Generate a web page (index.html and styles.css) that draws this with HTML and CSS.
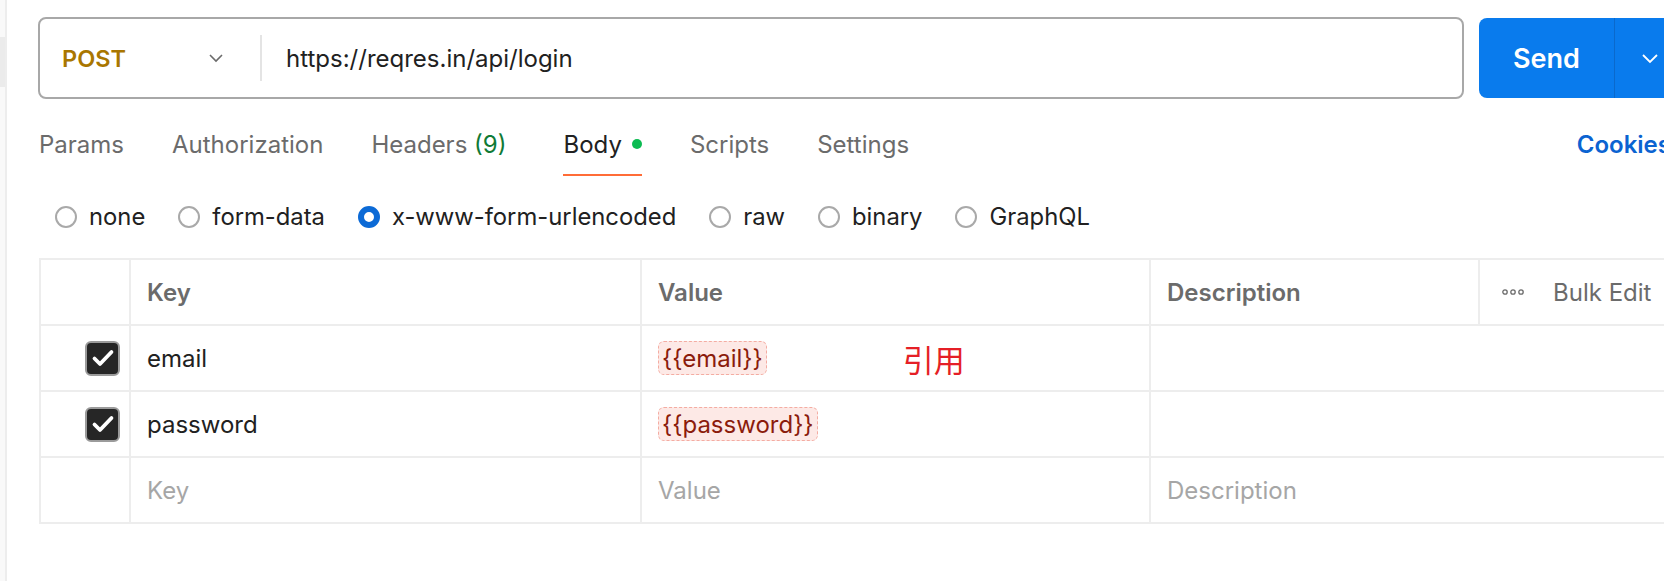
FILE: index.html
```html
<!DOCTYPE html>
<html lang="en">
<head>
  <meta charset="UTF-8">
  <title>POST login</title>
  <link rel="stylesheet" href="styles.css">
</head>
<body>
<div class="app">
  <aside class="sidebar"><div class="sidebar-active"></div></aside>

  <main class="workspace">
    <!-- request bar -->
    <div class="request-bar">
      <div class="url-box">
        <div class="method">
          <span>POST</span>
          <svg width="16" height="10" viewBox="0 0 16 10"><path d="M2 2l6 6 6-6" fill="none" stroke="#6b6b6b" stroke-width="1.6"/></svg>
        </div>
        <div class="url-divider"></div>
        <div class="url">https://reqres.in/api/login</div>
      </div>
      <div class="send-group">
        <div class="send-btn">Send</div>
        <div class="send-more">
          <svg width="18" height="11" viewBox="0 0 18 11"><path d="M2 2l7 7 7-7" fill="none" stroke="#fff" stroke-width="1.8"/></svg>
        </div>
      </div>
    </div>

    <nav class="tabs">
      <span class="tab">Params</span>
      <span class="tab">Authorization</span>
      <span class="tab headers">Headers <span class="count">(9)</span></span>
      <span class="tab active">Body<span class="dot"></span></span>
      <span class="tab">Scripts</span>
      <span class="tab">Settings</span>
      <span class="cookies">Cookies</span>
    </nav>

    <div class="body-types">
      <label class="radio"><span class="radio-dot"></span>none</label>
      <label class="radio"><span class="radio-dot"></span>form-data</label>
      <label class="radio"><span class="radio-dot checked"></span>x-www-form-urlencoded</label>
      <label class="radio"><span class="radio-dot"></span>raw</label>
      <label class="radio"><span class="radio-dot"></span>binary</label>
      <label class="radio"><span class="radio-dot"></span>GraphQL</label>
    </div>

    <div class="kv-table">
      <div class="kv-row kv-head">
        <div class="cell"></div>
        <div class="cell">Key</div>
        <div class="cell">Value</div>
        <div class="cell">Description</div>
        <div class="cell bulk">
          <svg width="22" height="6" viewBox="0 0 22 6"><circle cx="3" cy="3" r="2.2" fill="none" stroke="#6b6b6b" stroke-width="1.3"/><circle cx="11" cy="3" r="2.2" fill="none" stroke="#6b6b6b" stroke-width="1.3"/><circle cx="19" cy="3" r="2.2" fill="none" stroke="#6b6b6b" stroke-width="1.3"/></svg>
          <span>Bulk Edit</span>
        </div>
      </div>
      <div class="kv-row">
        <div class="cell check-cell"><span class="checkbox"><svg width="24" height="20" viewBox="0 0 24 20"><path d="M3.5 10.5l5.5 5.5L20.5 4" fill="none" stroke="#fff" stroke-width="3.8" stroke-linecap="round" stroke-linejoin="round"/></svg></span></div>
        <div class="cell">email</div>
        <div class="cell"><span class="var">{{email}}</span><span class="note">引用</span></div>
        <div class="cell"></div>
      </div>
      <div class="kv-row">
        <div class="cell check-cell"><span class="checkbox"><svg width="24" height="20" viewBox="0 0 24 20"><path d="M3.5 10.5l5.5 5.5L20.5 4" fill="none" stroke="#fff" stroke-width="3.8" stroke-linecap="round" stroke-linejoin="round"/></svg></span></div>
        <div class="cell">password</div>
        <div class="cell"><span class="var">{{password}}</span></div>
        <div class="cell"></div>
      </div>
      <div class="kv-row placeholder">
        <div class="cell"></div>
        <div class="cell">Key</div>
        <div class="cell">Value</div>
        <div class="cell">Description</div>
      </div>
    </div>
  </main>
</div>
</body>
</html>
```

FILE: styles.css
```css
body {
  margin: 0;
  font-family: "Inter", "Noto Sans", sans-serif;
  color: #212121;
  background: #fff;
  overflow: hidden;
}

.app {
  display: flex;
  height: 100vh;
}

.sidebar {
  flex-shrink: 0;
  width: 5px;
  padding-top: 37px;
  background: #f9f9f9;
  border-right: 2px solid #ededed;
}

.sidebar-active {
  height: 50px;
  background: #ebebeb;
}

.workspace {
  flex-shrink: 0;
  width: 1700px;
  padding: 17px 0 0 31px;
}

/* request bar */
.request-bar {
  display: flex;
  align-items: center;
  gap: 15px;
}

.url-box {
  flex-shrink: 0;
  width: 1426px;
  height: 82px;
  box-sizing: border-box;
  border: 2px solid #a8a8a8;
  border-radius: 8px;
  display: flex;
  align-items: center;
  padding-left: 22px;
}

.method {
  width: 162px;
  display: flex;
  align-items: center;
  justify-content: space-between;
  margin-right: 36px;
  font-size: 23.5px;
  font-weight: 600;
  color: #a97600;
}

.url-divider {
  width: 2px;
  height: 46px;
  background: #e4e4e4;
}

.url {
  margin-left: 24px;
  font-size: 24px;
}

.send-group {
  flex-shrink: 0;
  display: flex;
  height: 80px;
  background: #097bed;
  border-radius: 8px 0 0 8px;
}

.send-btn {
  width: 135px;
  display: flex;
  align-items: center;
  justify-content: center;
  border-right: 1px solid #0a69cc;
  color: #fff;
  font-size: 27px;
  font-weight: 600;
}

.send-more {
  width: 70px;
  display: flex;
  align-items: center;
  justify-content: center;
}

/* tabs */
.tabs {
  display: flex;
  align-items: flex-end;
  gap: 48px;
  margin-top: 34px;
  padding-left: 1px;
  width: 1632px;
}

.tab {
  font-size: 24px;
  line-height: 24px;
  color: #6b6b6b;
  padding-bottom: 17px;
  border-bottom: 2px solid transparent;
}

.tab.headers {
  margin-right: 9px;
}

.tab .count {
  color: #0f7a35;
}

.tab.active {
  color: #212121;
  border-bottom-color: #ff6c37;
}

.dot {
  display: inline-block;
  width: 10px;
  height: 10px;
  margin-left: 10px;
  margin-bottom: 4px;
  border-radius: 50%;
  background: #0cbb52;
}

.cookies {
  margin-left: auto;
  font-size: 24px;
  line-height: 24px;
  padding-bottom: 19px;
  font-weight: 600;
  color: #0b63d1;
}

/* body type radios */
.body-types {
  display: flex;
  gap: 33px;
  margin-top: 29px;
  padding-left: 17px;
}

.radio {
  display: flex;
  align-items: center;
  gap: 12px;
  font-size: 23.8px;
  line-height: 24px;
}

.radio-dot {
  width: 22px;
  height: 22px;
  box-sizing: border-box;
  border: 2px solid #a9a9a9;
  border-radius: 50%;
}

.radio-dot.checked {
  border: 6px solid #0c6ad6;
}

/* key / value table */
.kv-table {
  margin-top: 29px;
  margin-left: 1px;
  border-top: 2px solid #ededed;
  border-left: 2px solid #ededed;
}

.kv-row {
  display: grid;
  grid-template-columns: 90px 511px 509px 1fr;
  height: 66px;
  box-sizing: border-box;
  border-bottom: 2px solid #ededed;
}

.kv-head {
  grid-template-columns: 90px 511px 509px 329px 1fr;
  font-weight: 600;
  color: #6b6b6b;
}

.cell {
  display: flex;
  align-items: center;
  padding-left: 16px;
  border-right: 2px solid #ededed;
  font-size: 24px;
}

.bulk {
  padding-left: 22px;
  gap: 29px;
  font-weight: 400;
}

.check-cell {
  justify-content: flex-end;
  padding: 0 9px 0 0;
}

.checkbox {
  width: 35px;
  height: 35px;
  box-sizing: border-box;
  border: 2px solid #9b9b9b;
  border-radius: 6px;
  background: #262626;
  display: flex;
  align-items: center;
  justify-content: center;
}

.var {
  display: inline-flex;
  align-items: center;
  height: 34px;
  box-sizing: border-box;
  padding: 0 3px;
  border: 1.5px dashed #f4aca2;
  border-radius: 6px;
  background: #fde9e6;
  color: #8b1c0c;
}

.note {
  margin-left: 136px;
  font-family: "Noto Sans CJK SC", sans-serif;
  font-size: 31px;
  color: #e51f26;
}

.placeholder .cell {
  color: #a6a6a6;
}
```
